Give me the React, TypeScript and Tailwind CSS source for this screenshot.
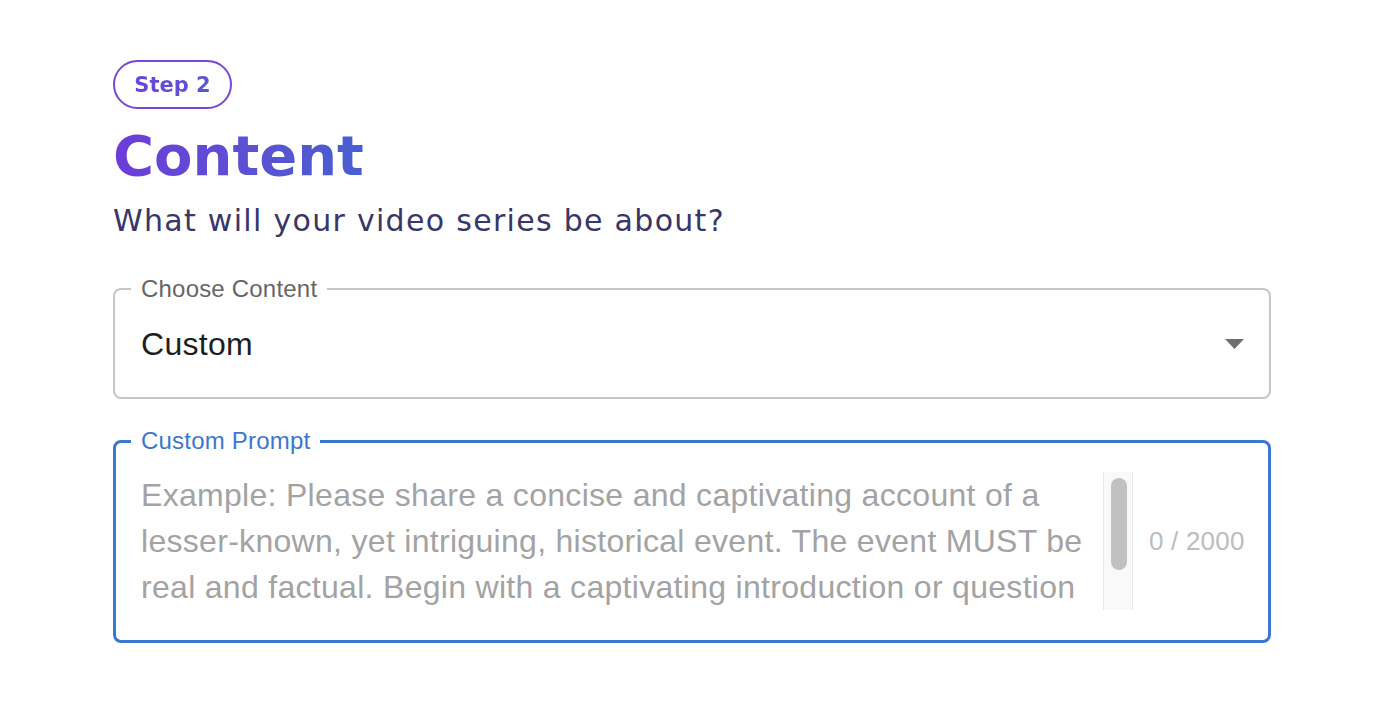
import React from "react";

export default function App() {
  const lines = [
    "Example: Please share a concise and captivating account of a",
    "lesser-known, yet intriguing, historical event. The event MUST be",
    "real and factual. Begin with a captivating introduction or question",
  ];
  return (
    <div className="min-h-screen w-full bg-white pl-[113px] pr-[109px] pt-[60px]">
      <div className="flex h-[49px] w-[119px] items-center justify-center rounded-full border-2 border-[#7a44df]">
        <span
          className="bg-gradient-to-r from-[#6a43d9] to-[#5b55d3] bg-clip-text text-[21px] font-bold leading-[24px] text-transparent"
          style={{ fontFamily: '"DejaVu Sans", sans-serif' }}
        >
          Step 2
        </span>
      </div>
      <h1
        className="mt-[14px] h-[66px] text-[56px] font-bold leading-[66px]"
        style={{ fontFamily: '"DejaVu Sans", sans-serif' }}
      >
        <span className="bg-gradient-to-r from-[#6d3bd8] to-[#475fcf] bg-clip-text text-transparent">
          Content
        </span>
      </h1>
      <p
        className="mt-[15px] text-[30px] leading-[34px] tracking-[1.3px] text-[#38366b]"
        style={{ fontFamily: '"DejaVu Sans", sans-serif' }}
      >
        What will your video series be about?
      </p>

      <fieldset
        className="mt-[37px] rounded-[8px] border-2 border-[#c6c6c6] p-0"
        style={{ fontFamily: '"Liberation Sans", Arial, sans-serif' }}
      >
        <legend className="ml-[16px] px-[10px] text-[24px] leading-[28px] tracking-[0.2px] text-[#666666]">
          Choose Content
        </legend>
        <div className="flex h-[94px] items-start pl-[26px] pr-[25px] pt-[18px]">
          <div className="flex h-[46px] flex-1 items-center text-[32px] leading-[46px] tracking-[0.3px] text-[#1e1e1e]">
            Custom
          </div>
          <div className="flex h-[46px] items-center">
            <svg width="19" height="10" viewBox="0 0 19 10">
              <path d="M0 0 L19 0 L9.5 10 Z" fill="#6f6f6f" />
            </svg>
          </div>
        </div>
      </fieldset>

      <fieldset
        className="mt-[28px] rounded-[8px] border-[3px] border-[#3b77d0] p-0"
        style={{ fontFamily: '"Liberation Sans", Arial, sans-serif' }}
      >
        <legend className="ml-[15px] px-[10px] text-[24px] leading-[28px] tracking-[0.2px] text-[#3b77d0]">
          Custom Prompt
        </legend>
        <div className="flex pb-[30px] pl-[25px] pt-[17px]">
          <div className="h-[138px] flex-1 overflow-hidden text-[32px] leading-[46px] tracking-[0.3px] text-[#a3a3a3]">
            {lines.map((l) => (
              <div key={l} className="whitespace-nowrap">
                {l}
              </div>
            ))}
          </div>
          <div className="relative h-[138px] w-[30px] border-x border-[#e8e8e8] bg-[#f9f9f9]">
            <div className="absolute left-[7px] top-[6px] h-[92px] w-[16px] rounded-full bg-[#c1c1c1]" />
          </div>
          <div className="flex h-[138px] w-[135px] items-center pl-[16px] text-[26px] tracking-[0.2px] text-[#bdbdbd]">
            0 / 2000
          </div>
        </div>
      </fieldset>
    </div>
  );
}
